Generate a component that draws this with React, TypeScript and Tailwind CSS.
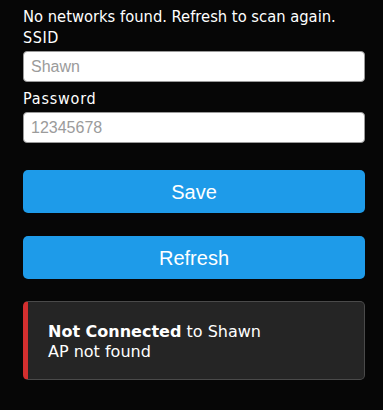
const inputCls =
  "block h-[31px] w-full rounded-[4px] border border-[#9a9a9a] bg-white px-[7px] font-['Liberation_Sans',Arial,sans-serif] text-[16px] text-black outline-none placeholder:text-[#9b9b9b]";
const buttonCls =
  "block h-[43px] w-full rounded-[5px] bg-[#1e9be9] font-['Liberation_Sans',Arial,sans-serif] text-[20px] text-white";

export default function App() {
  return (
    <div className="min-h-[410px] bg-[#060606] pl-[23px] pt-[6px] text-white">
      <div className="flex w-[342px] flex-col font-['DejaVu_Sans_Condensed','DejaVu_Sans',Tahoma,sans-serif]">
        <div className="whitespace-nowrap text-[16.4px] leading-[21px]">No networks found. Refresh to scan again.</div>
        <label className="text-[16px] leading-[21px] tracking-[0.6px]">SSID</label>
        <input className={`mt-[3px] ${inputCls}`} placeholder="Shawn" />
        <label className="mt-[6px] text-[16px] leading-[21px] tracking-[0.8px]">Password</label>
        <input className={`mt-[3px] ${inputCls}`} placeholder="12345678" />
        <button className={`mt-[27px] ${buttonCls}`}>Save</button>
        <button className={`mt-[23px] ${buttonCls}`}>Refresh</button>
        <div className="mt-[22px] flex h-[79px] flex-col justify-center rounded-[5px] border border-l-[5px] border-[#4a4a4a] border-l-[#d32f2f] bg-[#252525] pl-[20px] pt-[2px] font-['DejaVu_Sans',Verdana,sans-serif] text-[16px] leading-[20px]">
          <div>
            <span className="font-bold">Not Connected</span> to Shawn
          </div>
          <div>AP not found</div>
        </div>
      </div>
    </div>
  );
}
